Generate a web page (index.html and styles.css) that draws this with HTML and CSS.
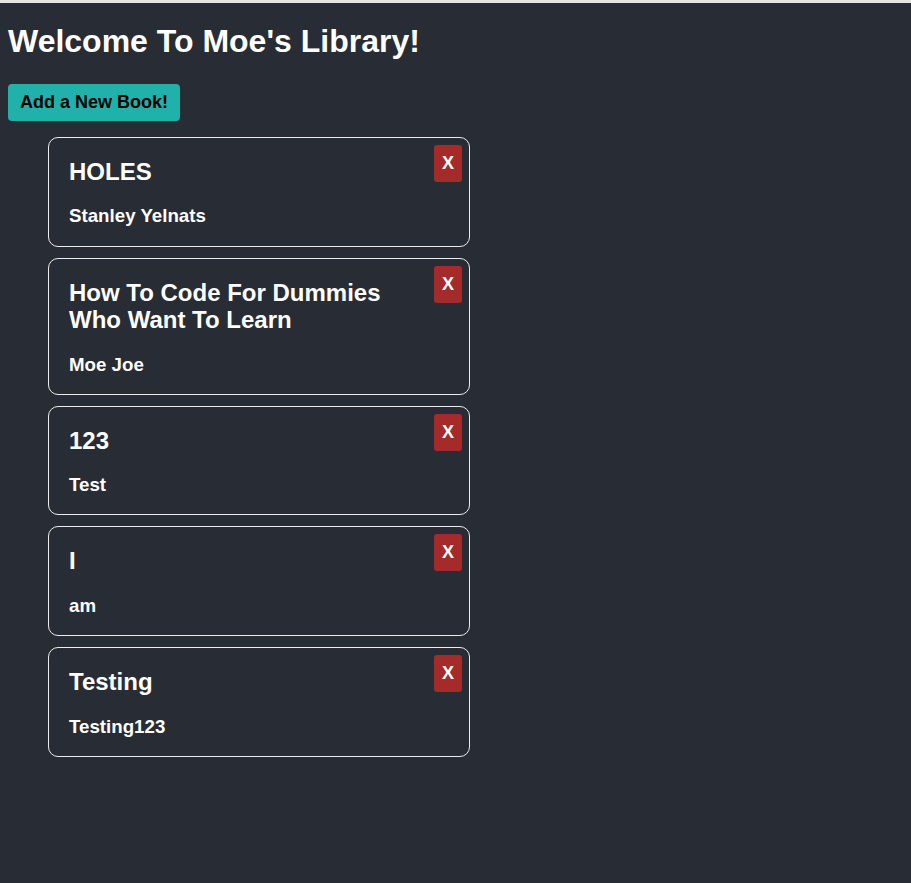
FILE: index.html
```html
<!DOCTYPE html>
<html lang="en">
<head>
<meta charset="utf-8">
<title>Moe's Library</title>
<link rel="stylesheet" href="styles.css">
</head>
<body>
<div class="app">
  <h1 class="title">Welcome To Moe's Library!</h1>
  <button class="add-btn">Add a New Book!</button>
  <ul class="book-list">
    <li class="book">
      <div class="book-info">
        <h2 class="book-title">HOLES</h2>
        <h3 class="book-author">Stanley Yelnats</h3>
      </div>
      <button class="del-btn">X</button>
    </li>
    <li class="book">
      <div class="book-info">
        <h2 class="book-title">How To Code For Dummies Who Want To Learn</h2>
        <h3 class="book-author">Moe Joe</h3>
      </div>
      <button class="del-btn">X</button>
    </li>
    <li class="book">
      <div class="book-info">
        <h2 class="book-title">123</h2>
        <h3 class="book-author">Test</h3>
      </div>
      <button class="del-btn">X</button>
    </li>
    <li class="book">
      <div class="book-info">
        <h2 class="book-title">I</h2>
        <h3 class="book-author">am</h3>
      </div>
      <button class="del-btn">X</button>
    </li>
    <li class="book">
      <div class="book-info">
        <h2 class="book-title">Testing</h2>
        <h3 class="book-author">Testing123</h3>
      </div>
      <button class="del-btn">X</button>
    </li>
  </ul>
</div>
</body>
</html>
```
FILE: styles.css
```css
html, body {
  margin: 0;
  padding: 0;
  height: 100%;
}
body {
  background: #282c34;
  border-top: 3px solid #e4e4e4;
  box-sizing: border-box;
  font-family: "Liberation Sans", Arial, sans-serif;
  color: #ffffff;
}
.app {
  padding: 0 8px;
  display: flow-root;
}
.title {
  font-size: 32px;
  font-weight: bold;
  line-height: 37px;
  margin: 20px 0 0;
}
.add-btn {
  display: block;
  margin-top: 24px;
  font-family: "Liberation Sans", Arial, sans-serif;
  font-size: 18px;
  font-weight: bold;
  color: #000;
  background: #20b2aa;
  border: none;
  border-radius: 4px;
  height: 37px;
  padding: 0 12px;
  cursor: pointer;
}
.book-list {
  list-style: none;
  margin: 16px 0;
  padding: 0 0 0 40px;
  display: flex;
  flex-direction: column;
  gap: 11px;
}
.book {
  width: 422px;
  box-sizing: border-box;
  border: 1px solid #ececec;
  border-radius: 10px;
  display: flex;
  align-items: flex-start;
}
.book-info {
  flex: 1;
  padding: 0 12px 0 20px;
}
.book-title {
  font-size: 24px;
  font-weight: bold;
  line-height: 27.6px;
  margin: 19.92px 0;
}
.book-author {
  font-size: 18.72px;
  font-weight: bold;
  line-height: 21.5px;
  margin: 18.72px 0;
}
.del-btn {
  flex: none;
  width: 28px;
  height: 37px;
  margin: 7px 7px 0 0;
  padding: 0;
  border: none;
  border-radius: 3px;
  background: #a52a2a;
  color: #ffffff;
  font-family: "Liberation Sans", Arial, sans-serif;
  font-size: 18px;
  font-weight: bold;
  cursor: pointer;
}
```
